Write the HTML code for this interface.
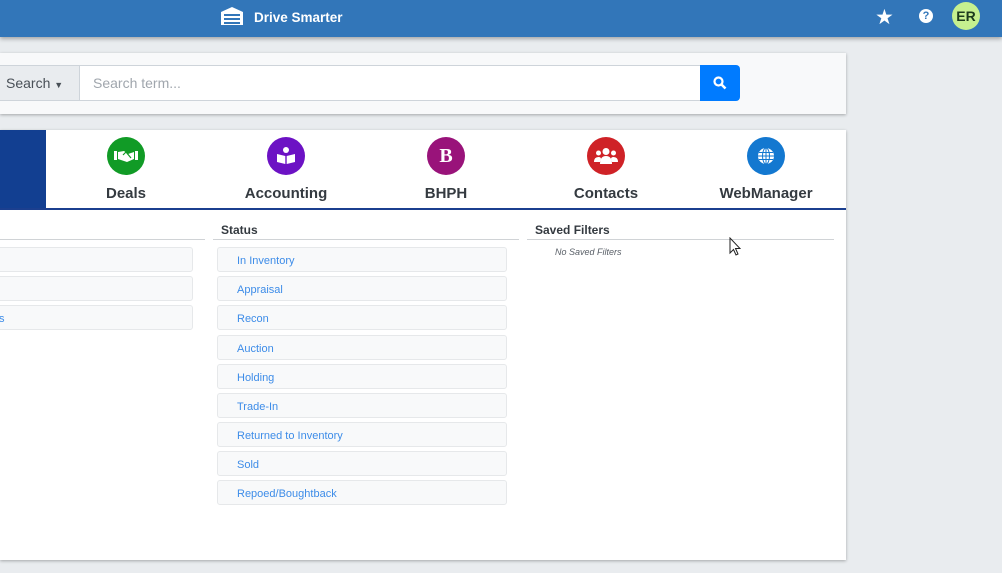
<!DOCTYPE html><html><head><style>
*{box-sizing:border-box;margin:0;padding:0}
body{width:1002px;height:573px;overflow:hidden;background:#e9ecef;font-family:"Liberation Sans",Arial,sans-serif;position:relative}
.top{position:absolute;left:0;top:0;width:1002px;height:37px;background:#3276b9;box-shadow:0 2px 4px rgba(0,0,0,.3)}
.panel{position:absolute;left:0;top:53px;width:846px;height:61px;background:#f8f9fa;box-shadow:0 1px 3px rgba(0,0,0,.3)}
.card{position:absolute;left:0;top:130px;width:846px;height:430px;background:#fff;box-shadow:0 1px 3px rgba(0,0,0,.3)}
.nav{position:absolute;width:160px;text-align:center;top:0}
.nav .c{width:38px;height:38px;border-radius:50%;margin:7px auto 0;display:flex;align-items:center;justify-content:center}
.nav .l{font-weight:bold;font-size:15px;color:#343a40;margin-top:10px}
.btn{position:absolute;left:217px;width:290px;height:25px;background:#f8f9fa;border:1px solid #e6e8ea;border-radius:3px;font-size:11px;color:#3d8ce8;padding:7px 0 0 19px}
.lb{position:absolute;left:-5px;width:198px;height:25px;background:#f8f9fa;border:1px solid #e6e8ea;border-radius:3px;font-size:11px;color:#3d8ce8;padding:7px 0 0 0}
.h{position:absolute;font-size:12px;font-weight:bold;color:#343a40}
.ln{position:absolute;height:1px;background:#d0d3d6}
</style></head><body>
<div class="top">
 <svg style="position:absolute;left:220px;top:6px" width="24" height="20" viewBox="0 0 24 20"><path d="M1 6 L12 1 L23 6 V19 H1Z" fill="#fff"/><rect x="4" y="8" width="16" height="2" fill="#3276b9"/><rect x="4" y="12" width="16" height="2" fill="#3276b9"/><rect x="4" y="16" width="16" height="2" fill="#3276b9"/></svg>
 <div style="position:absolute;left:254px;top:10px;color:#fff;font-weight:bold;font-size:13.5px">Drive Smarter</div>
 <div style="position:absolute;left:875px;top:5px;color:#fff;font-size:21px">★</div>
 <div style="position:absolute;left:919px;top:9px;width:14px;height:14px;border-radius:50%;background:#fff;color:#3276b9;font-size:11px;font-weight:bold;text-align:center;line-height:14px">?</div>
 <div style="position:absolute;left:952px;top:2px;width:28px;height:28px;border-radius:50%;background:#c6f08f;color:#1d3b1d;font-weight:bold;font-size:14px;text-align:center;line-height:28px">ER</div>
</div>
<div class="panel">
 <div style="position:absolute;left:0;top:12px;width:80px;height:36px;background:#e9ecef;border:1px solid #ced4da;border-left:none;font-size:14px;color:#495057;padding:9px 0 0 6px">Search <span style="font-size:9px">▼</span></div>
 <div style="position:absolute;left:79px;top:12px;width:622px;height:36px;background:#fff;border:1px solid #ced4da;font-size:14px;color:#a0a6ad;padding:9px 0 0 13px">Search term...</div>
 <div style="position:absolute;left:700px;top:12px;width:40px;height:36px;background:#007bff;border-radius:0 4px 4px 0"><svg style="position:absolute;left:13px;top:11px" width="14" height="14" viewBox="0 0 14 14"><circle cx="5.5" cy="5.5" r="4" stroke="#fff" stroke-width="2.2" fill="none"/><path d="M8.5 8.5 L12.5 12.5" stroke="#fff" stroke-width="2.6"/></svg></div>
</div>
<div class="card">
 <div style="position:absolute;left:0;top:0;width:46px;height:78px;background:#123f91"></div>
 <div style="position:absolute;left:0;top:78px;width:846px;height:2px;background:#1b3f8f"></div>
 <div class="nav" style="left:46px"><div class="c" style="background:#119b26"><svg width="24" height="16" viewBox="0 0 24 16"><rect x="0" y="3" width="3" height="9" fill="#fff"/><rect x="21" y="3" width="3" height="9" fill="#fff"/><path d="M4 4 L10 3 L14 6 L20 4 V11 L13 14 L4 11Z" fill="#fff"/><path d="M9 7 L12 4 L17 10" stroke="#119b26" stroke-width="1.2" fill="none"/></svg></div><div class="l">Deals</div></div>
 <div class="nav" style="left:206px"><div class="c" style="background:#6c12c4"><svg width="20" height="20" viewBox="0 0 20 20"><circle cx="10" cy="4" r="3" fill="#fff"/><path d="M1 8 L9.3 10 V18 L1 16Z M19 8 L10.7 10 V18 L19 16Z" fill="#fff"/></svg></div><div class="l">Accounting</div></div>
 <div class="nav" style="left:366px"><div class="c" style="background:#99137a;color:#fff;font-family:'Liberation Serif',serif;font-weight:bold;font-size:20px">B</div><div class="l">BHPH</div></div>
 <div class="nav" style="left:526px"><div class="c" style="background:#cf2227"><svg width="26" height="18" viewBox="0 0 26 18"><circle cx="13" cy="4.5" r="3.5" fill="#fff"/><circle cx="5.5" cy="6" r="2.5" fill="#fff"/><circle cx="20.5" cy="6" r="2.5" fill="#fff"/><path d="M7 17 Q7 9 13 9 Q19 9 19 17Z" fill="#fff"/><path d="M1 15 Q1 10 5.5 10 Q8 10 8 12 L7 15Z M25 15 Q25 10 20.5 10 Q18 10 18 12 L19 15Z" fill="#fff"/></svg></div><div class="l">Contacts</div></div>
 <div class="nav" style="left:686px"><div class="c" style="background:#1378d0"><svg width="18" height="18" viewBox="0 0 18 18"><circle cx="9" cy="9" r="8" fill="#fff"/><path d="M1 9 H17 M9 1 V17 M2 5.5 H16 M2 12.5 H16" stroke="#1378d0" stroke-width="1"/><ellipse cx="9" cy="9" rx="3.5" ry="8" stroke="#1378d0" stroke-width="1" fill="none"/></svg></div><div class="l">WebManager</div></div>

 <div class="ln" style="left:0;top:109px;width:205px"></div>
 <div class="lb" style="top:117px"></div>
 <div class="lb" style="top:146px"></div>
 <div class="lb" style="top:175px">ts</div>
 <div class="h" style="left:221px;top:93px">Status</div>
 <div class="ln" style="left:213px;top:109px;width:306px"></div>
 <div class="btn" style="top:117px">In Inventory</div>
 <div class="btn" style="top:146px">Appraisal</div>
 <div class="btn" style="top:175px">Recon</div>
 <div class="btn" style="top:205px">Auction</div>
 <div class="btn" style="top:234px">Holding</div>
 <div class="btn" style="top:263px">Trade-In</div>
 <div class="btn" style="top:292px">Returned to Inventory</div>
 <div class="btn" style="top:321px">Sold</div>
 <div class="btn" style="top:350px">Repoed/Boughtback</div>
 <div class="h" style="left:535px;top:93px">Saved Filters</div>
 <div class="ln" style="left:527px;top:109px;width:307px"></div>
 <div style="position:absolute;left:555px;top:117px;font-size:9px;font-style:italic;color:#5a6068">No Saved Filters</div>
</div>
<svg style="position:absolute;left:729px;top:237px" width="12" height="19" viewBox="0 0 12 19"><path d="M1 1 V16 L4.5 12.5 L7 18 L9 17 L6.5 11.5 H11Z" fill="#fff" stroke="#222" stroke-width="1"/></svg>
</body></html>
